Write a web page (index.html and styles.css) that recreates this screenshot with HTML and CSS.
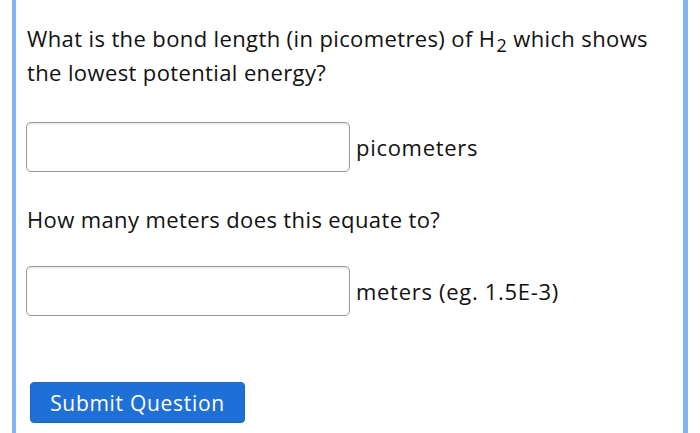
FILE: index.html
```html
<!DOCTYPE html>
<html>
<head>
<meta charset="utf-8">
<link rel="stylesheet" href="styles.css">
</head>
<body>
<div class="frame">
  <p class="question">What is the bond length (in picometres) of H<sub class="sub">2</sub> which shows the lowest potential energy?</p>
  <div class="answer">
    <input class="box" type="text">
    <span class="unit">picometers</span>
  </div>
  <p class="question question-second">How many meters does this equate to?</p>
  <div class="answer">
    <input class="box" type="text">
    <span class="unit">meters (eg. 1.5E-3)</span>
  </div>
  <button class="submit" type="button">Submit Question</button>
</div>
</body>
</html>
```
FILE: styles.css
```css
html, body {
  margin: 0;
  padding: 0;
  background: #ffffff;
}
body {
  font-family: "Open Sans", "Noto Sans", sans-serif;
  color: #111111;
}
.frame {
  box-sizing: border-box;
  margin-left: 12px;
  width: 676px;
  height: 433px;
  border-left: 4px solid #80b4f4;
  border-right: 5px solid #80b4f4;
  padding: 21px 10px 0 10px;
  display: flex;
  flex-direction: column;
  align-items: flex-start;
}
.question {
  margin: 0;
  font-size: 22px;
  line-height: 34px;
  letter-spacing: 0.38px;
  padding-left: 1px;
}
.sub {
  font-size: 0.82em;
  vertical-align: -0.3em;
  line-height: 0;
  margin-left: 1px;
}
.answer {
  display: flex;
  align-items: center;
  gap: 6px;
  margin-top: 33px;
}
.question-second {
  margin-top: 30px;
}
.box {
  box-sizing: border-box;
  width: 324px;
  height: 50px;
  border: 1px solid #9a9a9a;
  border-radius: 5px;
  box-shadow: inset 0 1px 2px rgba(0,0,0,0.12);
  margin: 0;
  background: #fff;
}
.unit {
  font-size: 22px;
  line-height: 34px;
  letter-spacing: 0.7px;
}
.question-second + .answer {
  margin-top: 30px;
}
.submit {
  margin-top: 66px;
  margin-left: 4px;
  width: 215px;
  height: 41px;
  background: #1f70d6;
  color: #ffffff;
  border: 1px solid #1a64c2;
  border-radius: 4px;
  font-family: "Open Sans", "Noto Sans", sans-serif;
  font-size: 21px;
  letter-spacing: 0.7px;
  padding: 0;
}
```
